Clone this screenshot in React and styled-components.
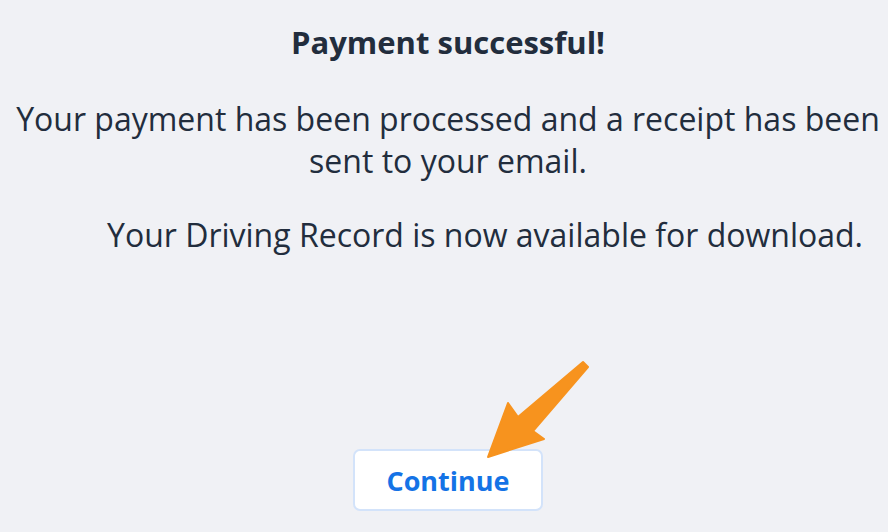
import React from "react";
import styled, { createGlobalStyle } from "styled-components";

const GlobalStyle = createGlobalStyle`
  html, body {
    margin: 0;
    padding: 0;
    background: #f0f1f5;
  }
  body {
    font-family: "Open Sans", "Noto Sans", sans-serif;
    color: #222d3d;
  }
`;

const Page = styled.div`
  width: 888px;
  height: 532px;
  position: relative;
  overflow: hidden;
  display: flex;
  flex-direction: column;
  align-items: center;
  box-sizing: border-box;
  padding: 22px 0 0 8px;
`;

const Title = styled.h2`
  margin: 0;
  font-size: 31px;
  font-weight: 700;
  line-height: 40px;
  white-space: nowrap;
`;

const Message = styled.p`
  margin: ${(p) => p.top || 0}px 0 0 ${(p) => p.shift || 0}px;
  font-size: 32px;
  line-height: 42px;
  text-align: center;
  white-space: nowrap;
`;

const Button = styled.button`
  margin-top: 193px;
  width: 190px;
  height: 62px;
  background: #fff;
  border: 2px solid #d3e3fa;
  border-radius: 7px;
  color: #1473e6;
  font-family: "Open Sans", sans-serif;
  font-size: 27px;
  font-weight: 700;
  cursor: pointer;
`;

const Arrow = styled.svg`
  position: absolute;
  left: 0;
  top: 0;
  pointer-events: none;
`;

export default function App() {
  return (
    <>
      <GlobalStyle />
      <Page>
        <Title>Payment successful!</Title>
        <Message top={36}>
          Your payment has been processed and a receipt has been
          <br />
          sent to your email.
        </Message>
        <Message top={32} shift={74}>
          Your Driving Record is now available for download.
        </Message>
        <Button>Continue</Button>
        <Arrow width="888" height="532" viewBox="0 0 888 532">
          <polygon
            points="488,457 508,403 518,417 583,362 588,367 533,431 544,439"
            fill="#f7931e"
            stroke="#f7931e"
            strokeWidth="2"
            strokeLinejoin="round"
          />
        </Arrow>
      </Page>
    </>
  );
}
